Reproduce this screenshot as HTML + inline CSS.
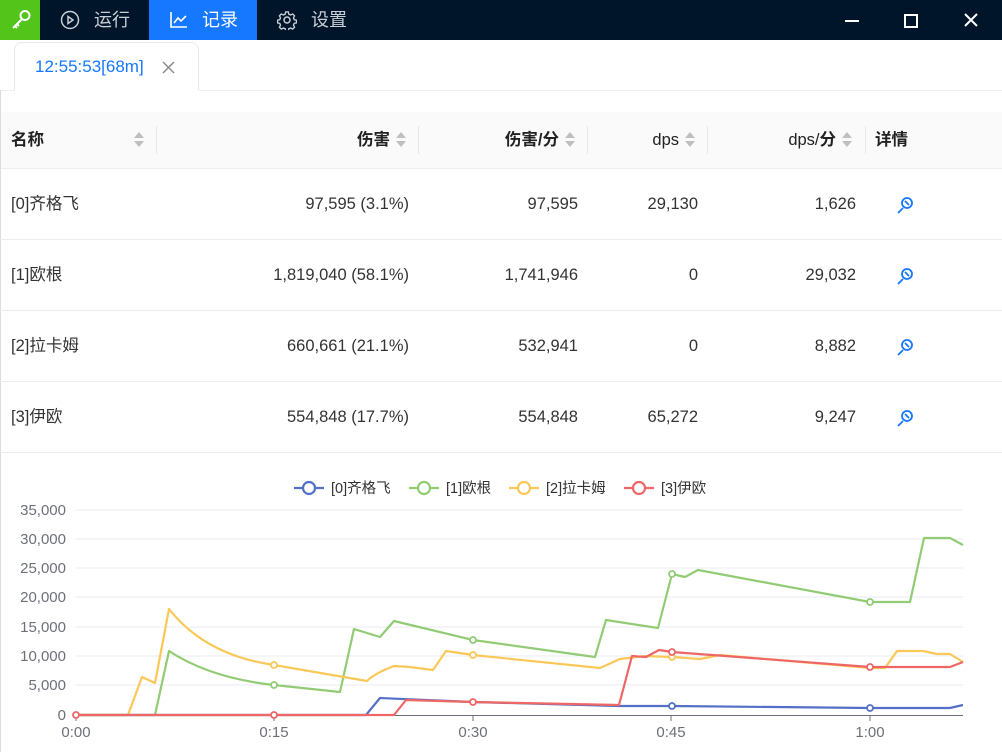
<!DOCTYPE html>
<html><head><meta charset="utf-8"><style>
*{margin:0;padding:0;box-sizing:border-box}
body{width:1002px;height:752px;overflow:hidden;background:#fff;font-family:"Liberation Sans","Noto Sans CJK SC",sans-serif;position:relative;color:#222}
.a{position:absolute}
.top{left:0;top:0;width:1002px;height:40px;background:#001529}
.nav{top:0;height:40px;line-height:40px;color:#c9cfd6;font-size:18px}
.th{top:112px;height:57px;line-height:57px;font-weight:bold;font-size:16.5px;color:#222}
.row{left:0;width:1002px;height:71px;border-bottom:1px solid #ececec}
.c{position:absolute;font-size:16.5px;color:#333;line-height:71px;top:0}
.r{text-align:right}
.sep{top:126px;width:1px;height:28px;background:#e8e8e8}
.sort{position:absolute;top:132px;width:10px;height:16px}
.sort:before{content:"";position:absolute;left:0;top:0;border:5px solid transparent;border-bottom:6px solid #bfbfbf;border-top:0}
.sort:after{content:"";position:absolute;left:0;top:9px;border:5px solid transparent;border-top:6px solid #bfbfbf;border-bottom:0}
</style></head><body>
<div class="a top"></div>
<div class="a" style="left:0;top:0;width:40px;height:40px;background:#52c41a"></div>
<svg class="a" style="left:10px;top:9px" width="22" height="22" viewBox="0 0 22 22"><circle cx="15" cy="6.5" r="4.5" fill="none" stroke="#fff" stroke-width="2"/><path d="M12 10 L3 19 M5 17 L7 19 M7 15 L9 17" stroke="#fff" stroke-width="2" fill="none"/></svg>
<svg class="a" style="left:60px;top:10px" width="20" height="20" viewBox="0 0 20 20"><circle cx="10" cy="10" r="8.5" fill="none" stroke="#c9cfd6" stroke-width="1.5"/><path d="M8 6.5 L13 10 L8 13.5Z" fill="none" stroke="#c9cfd6" stroke-width="1.5"/></svg>
<div class="a nav" style="left:94px">运行</div>
<div class="a" style="left:149px;top:0;width:108px;height:40px;background:#1677ff"></div>
<svg class="a" style="left:170px;top:11px" width="18" height="18" viewBox="0 0 18 18"><path d="M1 1 V16 H17 M4 12 L8 7 L11 10 L16 5" fill="none" stroke="#fff" stroke-width="1.6"/></svg>
<div class="a nav" style="left:202px;color:#fff">记录</div>
<svg class="a" style="left:277px;top:10px" width="20" height="20" viewBox="0 0 20 20"><circle cx="10" cy="10" r="3" fill="none" stroke="#c9cfd6" stroke-width="1.5"/><path d="M8.5 1.5h3l.5 2.5 2 1 2.3-1.2 2.1 2.1-1.2 2.3.8 2 2.5.5v3l-2.5.5-.8 2 1.2 2.3-2.1 2.1-2.3-1.2-2 .8-.5 2.5h-3l-.5-2.5-2-.8-2.3 1.2-2.1-2.1 1.2-2.3-.8-2-2.5-.5v-3l2.5-.5.8-2-1.2-2.3 2.1-2.1 2.3 1.2 2-1z" transform="scale(0.9) translate(1.1 0.6)" fill="none" stroke="#c9cfd6" stroke-width="1.5"/></svg>
<div class="a nav" style="left:311px">设置</div>
<div class="a" style="left:845px;top:20px;width:14px;height:2px;background:#fff"></div>
<div class="a" style="left:904px;top:14px;width:14px;height:14px;border:2px solid #fff"></div>
<svg class="a" style="left:964px;top:13px" width="14" height="14"><path d="M1 1L13 13M13 1L1 13" stroke="#fff" stroke-width="2"/></svg>
<!-- tab -->
<div class="a" style="left:0;top:90px;width:1002px;height:1px;background:#eee"></div>
<div class="a" style="left:14px;top:42px;width:185px;height:49px;border:1px solid #e8e8e8;border-bottom:1px solid #fff;border-radius:8px 8px 0 0;background:#fff"></div>
<div class="a" style="left:35px;top:57px;font-size:17px;color:#1677ff">12:55:53[68m]</div>
<svg class="a" style="left:162px;top:61px" width="13" height="13"><path d="M1 1L12 12M12 1L1 12" stroke="#888" stroke-width="1.4"/></svg>
<div class="a" style="left:0;top:90px;width:1px;height:662px;background:#ddd"></div>
<!-- table -->
<div class="a" style="left:1px;top:112px;width:1001px;height:57px;background:#fafafa;border-bottom:1px solid #eee"></div>
<div class="a th" style="left:11px">名称</div><span class="sort" style="left:134px"></span>
<div class="a sep" style="left:156px"></div>
<div class="a th" style="left:290px;width:100px;text-align:right">伤害</div><span class="sort" style="left:396px"></span>
<div class="a sep" style="left:418px"></div>
<div class="a th" style="left:459px;width:100px;text-align:right">伤害/分</div><span class="sort" style="left:565px"></span>
<div class="a sep" style="left:587px"></div>
<div class="a th" style="left:579px;width:100px;text-align:right;font-weight:normal">dps</div><span class="sort" style="left:685px"></span>
<div class="a sep" style="left:707px"></div>
<div class="a th" style="left:736px;width:100px;text-align:right"><span style="font-weight:normal">dps/</span>分</div><span class="sort" style="left:842px"></span>
<div class="a sep" style="left:865px"></div>
<div class="a th" style="left:875px">详情</div>

<div class="a row" style="top:169px"><div class="c" style="left:11px">[0]齐格飞</div><div class="c r" style="right:593px">97,595 (3.1%)</div><div class="c r" style="right:424px">97,595</div><div class="c r" style="right:304px">29,130</div><div class="c r" style="right:146px">1,626</div></div>
<div class="a row" style="top:240px"><div class="c" style="left:11px">[1]欧根</div><div class="c r" style="right:593px">1,819,040 (58.1%)</div><div class="c r" style="right:424px">1,741,946</div><div class="c r" style="right:304px">0</div><div class="c r" style="right:146px">29,032</div></div>
<div class="a row" style="top:311px"><div class="c" style="left:11px">[2]拉卡姆</div><div class="c r" style="right:593px">660,661 (21.1%)</div><div class="c r" style="right:424px">532,941</div><div class="c r" style="right:304px">0</div><div class="c r" style="right:146px">8,882</div></div>
<div class="a row" style="top:382px"><div class="c" style="left:11px">[3]伊欧</div><div class="c r" style="right:593px">554,848 (17.7%)</div><div class="c r" style="right:424px">554,848</div><div class="c r" style="right:304px">65,272</div><div class="c r" style="right:146px">9,247</div></div>
<svg class="a" style="left:0;top:0" width="1002" height="752">
<g fill="none" stroke="#1677ff" stroke-width="1.8">
<circle cx="907" cy="203" r="5"/><path d="M903 208L898 213M905 201L909 205"/>
<circle cx="907" cy="274" r="5"/><path d="M903 279L898 284M905 272L909 276"/>
<circle cx="907" cy="345" r="5"/><path d="M903 350L898 355M905 343L909 347"/>
<circle cx="907" cy="416" r="5"/><path d="M903 421L898 426M905 414L909 418"/>
</g>
<!-- chart -->
<g stroke="#e8ebf0" stroke-width="1">
<path d="M76 510H963M76 539H963M76 568H963M76 597H963M76 627H963M76 656H963M76 685H963"/></g>
<path d="M76 715.5H963" stroke="#6e7079" stroke-width="1"/>
<path d="M76 716v5M274 716v5M473 716v5M671 716v5M870 716v5" stroke="#6e7079"/>
<g font-size="15" fill="#6e7079" text-anchor="end" font-family="Liberation Sans,sans-serif">
<text x="66" y="515">35,000</text><text x="66" y="544">30,000</text><text x="66" y="573">25,000</text><text x="66" y="602">20,000</text><text x="66" y="632">15,000</text><text x="66" y="661">10,000</text><text x="66" y="690">5,000</text><text x="66" y="720">0</text></g>
<g font-size="15" fill="#6e7079" text-anchor="middle" font-family="Liberation Sans,sans-serif">
<text x="76" y="737">0:00</text><text x="274" y="737">0:15</text><text x="473" y="737">0:30</text><text x="671" y="737">0:45</text><text x="870" y="737">1:00</text></g>
<g fill="none" stroke-width="2.2" stroke-linejoin="round">
<path stroke="#91cc75" d="M76 715H155L169 651Q210 678 274 685L340 692L354 629L380 637L394 621L473 640L595 657L606 620L658 628L672 574L685 577L698 570L870 602L910 602L924 538L950 538L963 545"/>
<path stroke="#fac858" d="M76 715H128L142 677L155 683L169 609Q205 655 274 665L367 681Q375 673 394 666L410 667L433 670L446 651L473 655L600 668L620 659L645 656L672 657L700 659L720 655L870 668L885 668L897 651L923 651L937 654L950 654L963 662"/>
<path stroke="#5470c6" d="M76 715H366L380 698L473 702L619 706L672 706L870 708L950 708L963 705"/>
<path stroke="#ee6666" d="M76 715H394L406 700L473 702L619 705L632 656L646 657L659 650L672 652L870 667L950 667L963 662"/>
</g>
<g fill="#fff" stroke-width="1.8">
<circle cx="76" cy="715" r="3" stroke="#ee6666"/><circle cx="274" cy="715" r="3" stroke="#ee6666"/>
<circle cx="274" cy="685" r="3" stroke="#91cc75"/><circle cx="274" cy="665" r="3" stroke="#fac858"/>
<circle cx="473" cy="640" r="3" stroke="#91cc75"/><circle cx="473" cy="655" r="3" stroke="#fac858"/><circle cx="473" cy="702" r="3" stroke="#ee6666"/>
<circle cx="672" cy="574" r="3" stroke="#91cc75"/><circle cx="672" cy="657" r="3" stroke="#fac858"/><circle cx="672" cy="652" r="3" stroke="#ee6666"/><circle cx="672" cy="706" r="3" stroke="#5470c6"/>
<circle cx="870" cy="602" r="3" stroke="#91cc75"/><circle cx="870" cy="667" r="3" stroke="#ee6666"/><circle cx="870" cy="708" r="3" stroke="#5470c6"/>
</g>
<!-- legend -->
<g stroke-width="2.2" fill="#fff">
<path d="M294 488h30" stroke="#5470c6"/><circle cx="309" cy="488" r="6" stroke="#5470c6"/>
<path d="M409 488h30" stroke="#91cc75"/><circle cx="424" cy="488" r="6" stroke="#91cc75"/>
<path d="M509 488h30" stroke="#fac858"/><circle cx="524" cy="488" r="6" stroke="#fac858"/>
<path d="M624 488h30" stroke="#ee6666"/><circle cx="639" cy="488" r="6" stroke="#ee6666"/>
</g>
<g font-size="14.5" fill="#333" font-family="Liberation Sans,Noto Sans CJK SC,sans-serif">
<text x="331" y="493">[0]齐格飞</text><text x="446" y="493">[1]欧根</text><text x="546" y="493">[2]拉卡姆</text><text x="661" y="493">[3]伊欧</text></g>
</svg>
</body></html>
